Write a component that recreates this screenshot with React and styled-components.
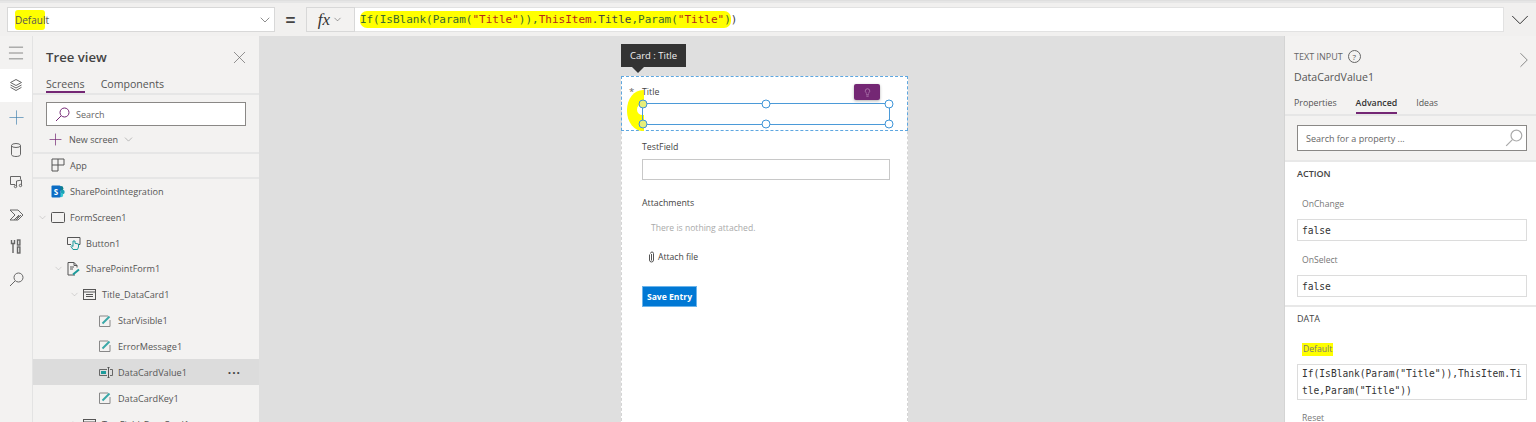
import React from "react";
import styled, { createGlobalStyle } from "styled-components";
import { ChevronDown, ChevronRight, X, Plus, Menu, Lightbulb } from "lucide-react";

const Global = createGlobalStyle`
  html, body { margin: 0; padding: 0; background: #fff; }
  body { font-family: "Open Sans", "Noto Sans", sans-serif; color: #444; }
  * { box-sizing: border-box; }
`;

const Page = styled.div`
  width: 1536px; height: 422px; overflow: hidden; display: flex; flex-direction: column; background: #dfdfdf;
`;
const TopBar = styled.div`
  height: 35px; flex: none; display: flex; align-items: center; padding: 0 0 0 7px;
  background: #f1f0ef; border-top: 2px solid #e6e6e6; margin-top: 1px;
`;
const PropSelect = styled.div`
  width: 269px; height: 25px; background: #fff; border: 1px solid #d8d8d8; display: flex; align-items: center;
  justify-content: space-between; padding: 0 1px 0 7px; font-size: 10px; color: #555;
`;
const Hl = styled.mark`
  background: #ffff00; color: inherit; border-radius: ${p => p.$r || 0}px; padding: ${p => p.$pad || "0"};
`;
const Equals = styled.div`
  width: 31px; text-align: center; font: 700 17px "Liberation Sans", sans-serif; color: #444; padding-top: 2px;
`;
const FxBox = styled.div`
  width: 49px; height: 25px; border: 1px solid #d8d8d8; background: #f3f2f1; display: flex; align-items: center;
  justify-content: center; gap: 2px; font: italic 17px "Liberation Serif", serif; color: #333;
`;
const FormulaBox = styled.div`
  width: 1153px; height: 25px; background: #fff; border: 1px solid #e2e2e2; border-left: none;
  display: flex; align-items: center; padding-left: 5px;
  font: 11px/1 "DejaVu Sans Mono", monospace; color: #3c6a2e; white-space: pre;
`;
const FxRed = styled.span` color: #b32a1c; `;
const Dark = styled.span` color: #444; `;
const FormulaToggle = styled.div`
  width: 32px; display: flex; justify-content: center; color: #333;
`;

const Body = styled.div` flex: 1; display: flex; min-height: 0; `;
const Rail = styled.nav`
  width: 33px; flex: none; background: #f3f2f1; border-right: 1px solid #e3e3e3; padding-top: 1px; display: flex; flex-direction: column;
`;
const RailItem = styled.div`
  height: 32.3px; flex: none; display: flex; align-items: center; justify-content: center;
  background: ${p => (p.$active ? "#fff" : "transparent")}; color: #555;
`;

const TreePanel = styled.aside`
  width: 226px; flex: none; background: #f3f2f1; display: flex; flex-direction: column;
`;
const TreeHead = styled.div`
  height: 39px; flex: none; display: flex; align-items: center; justify-content: space-between;
  padding: 3px 9px 0 13px; font-size: 13.2px; font-weight: 600; color: #444;
`;
const Tabs = styled.div`
  display: flex; gap: ${p => p.$gap}px; padding-left: ${p => p.$left}px; height: ${p => p.$h}px;
  border-bottom: 2px solid #e6e6e6; flex: none; font-size: ${p => p.$size}px; color: #555;
`;
const Tab = styled.div`
  height: calc(100%); display: flex; align-items: center; padding-top: ${p => p.$pt || 1}px; white-space: nowrap;
  border-bottom: 2px solid ${p => (p.$active ? "#742774" : "transparent")};
  font-weight: ${p => (p.$bold ? 600 : 400)}; color: ${p => (p.$bold ? "#333" : "#555")};
`;
const TreeSearch = styled.div`
  flex: none; height: 24px; margin: 7px 13px 0; background: #fff; border: 1px solid #8a8886; display: flex; align-items: center;
  gap: 6px; padding-left: 8px; font-size: 9px; color: #666;
`;
const NewScreen = styled.div`
  flex: none; height: 28px; display: flex; align-items: center; gap: 4px; padding-left: 13px; font-size: 9px; color: #555;
  border-bottom: 2px solid #e6e6e6;
`;
const RowList = styled.div` display: flex; flex-direction: column; `;
const Row = styled.div`
  position: relative; height: ${p => (p.$divider ? "24.5px" : "25.85px")}; flex: none; display: flex; align-items: center; font-size: 9.15px; white-space: nowrap; color: #555;
  padding-left: ${p => 4 + p.$level * 16}px; background: ${p => (p.$selected ? "#dcdcdc" : "transparent")};
  border-bottom: ${p => (p.$divider ? "2px solid #e6e6e6" : "none")};
`;
const Caret = styled.span` width: 14px; flex: none; display: flex; color: #aaa; `;
const RowIcon = styled.span` width: 19px; flex: none; display: flex; `;
const More = styled.span`
  position: absolute; right: 18px; top: 2px; font-size: 12px; letter-spacing: 1px; font-weight: 700; color: #444;
`;

const Canvas = styled.main`
  flex: 1; display: flex; justify-content: flex-start; padding-left: 362px; padding-top: 40px; background: #dfdfdf; min-width: 0; position: relative;
`;
const Tooltip = styled.div`
  position: absolute; left: 362px; top: 8px; width: 65px; height: 23px; background: #333; color: #f0f0f0; font-size: 9.5px;
  display: flex; align-items: center; justify-content: center;
  &::after { content: ""; position: absolute; left: 11px; top: 23px; border: 6px solid transparent; border-top-color: #333; border-bottom: none; }
`;
const Card = styled.div`
  width: 287px; height: 350px; background: #fff; border-left: 1px dashed #d4d4d4; border-right: 1px dashed #d4d4d4; display: flex; flex-direction: column;
`;
const SelectedCard = styled.div`
  position: relative; height: 55px; flex: none; margin: 0 -1px; border: 1px dashed #5ea7e0;
`;
const Field = styled.div` font-size: 8.8px; color: #444; `;
const TitleLabel = styled(Field)` position: absolute; left: 20px; top: 9px; `;
const Star = styled.span` position: absolute; left: 7px; top: 8px; font-size: 9.5px; color: #666; `;
const YellowBlob = styled.div`
  position: absolute; left: 5px; top: 13px; width: 17px; height: 41px; background: #ffff00;
  border-radius: 16px 0 0 16px / 20px 0 0 20px;
  &::after { content: ""; position: absolute; right: -1px; top: 14px; width: 8px; height: 11px; background: #fff; border-radius: 8px 0 0 8px; }
`;
const SelectBox = styled.div`
  position: absolute; left: 20px; top: 26px; width: 248px; height: 22px; border: 1px solid #4b9ad8; border-width: 1.5px 1px;
`;
const Handle = styled.span`
  position: absolute; width: 9px; height: 9px; border-radius: 50%; background: ${p => (p.$tinted ? "#e6ef7a" : "#fff")}; border: 1px solid #3f95d8;
  left: ${p => p.$x}; top: ${p => p.$y}; transform: translate(-50%, -50%);
`;
const IdeaBtn = styled.div`
  position: absolute; left: 232px; top: 7px; width: 26px; height: 16px; background: #742774; border-radius: 2px; color: #c9a2c9;
  display: flex; align-items: center; justify-content: center; box-shadow: 0 1px 3px rgba(0,0,0,.3);
`;
const CardBody = styled.div` padding: 10px 17px 0 20px; display: flex; flex-direction: column; `;
const TextBox = styled.div` height: 21px; margin-top: 6px; border: 1px solid #c8c8c8; background: #fff; `;
const AttachLabel = styled(Field)` margin-top: 17px; `;
const Nothing = styled.div` margin: 13px 0 0 9px; font-size: 8.6px; color: #aaa; `;
const AttachRow = styled.div` display: flex; align-items: center; gap: 3px; margin: 17px 0 0 6px; font-size: 8.6px; color: #444; `;
const SaveBtn = styled.div`
  width: 55px; height: 21px; margin-top: 23px; background: #0078d4; border: 1px solid #6cb4ea; color: #fff; font: 700 8.6px "Open Sans", sans-serif;
  display: flex; align-items: center; justify-content: center;
`;

const Inspector = styled.aside`
  width: 252px; flex: none; background: #fff; display: flex; flex-direction: column; border-left: 1px solid #d4d4d4;
`;
const InspectorHead = styled.div` background: #f3f2f1; flex: none; `;
const TypeRow = styled.div`
  height: 32px; padding: 8px 0 0 9px; display: flex; align-items: center; gap: 5px; font-size: 9px; color: #666; position: relative;
`;
const Help = styled.span`
  width: 13px; height: 13px; border-radius: 50%; border: 1px solid #666; font-size: 8px; display: flex; align-items: center; justify-content: center; color: #555;
`;
const Collapse = styled.span` position: absolute; right: -1px; top: 11px; color: #777; display: flex; `;
const CtlName = styled.div` padding-left: 9px; height: 14px; margin-top: 2px; font-size: 10.6px; line-height: 14px; color: #555; `;
const PropSearchWrap = styled.div` background: #f3f2f1; height: 46px; flex: none; padding: 9px 9px 0 12px; border-bottom: 2px solid #e8e8e8; `;
const PropSearch = styled.div`
  height: 26px; background: #fff; border: 1px solid #8a8886; display: flex; align-items: center; justify-content: space-between;
  padding: 0 3px 0 8px; font-size: 9px; color: #666;
`;
const SectionTitle = styled.div`
  height: ${p => p.$h}px; flex: none; padding: ${p => p.$top}px 0 0 12px; font-size: 9px; font-weight: ${p => p.$w || 400}; color: #444;
`;
const PropLabel = styled.div`
  height: ${p => p.$h}px; padding: ${p => p.$pt || 0}px 0 0 17px; display: flex; align-items: center; font-size: 8.6px; line-height: 1; color: #777; flex: none;
`;
const PropValue = styled.div`
  flex: none; margin: 0 9px 0 12px; min-height: 22px; border: 1px solid #dcdcdc; padding: 0 4px; display: flex; align-items: center;
  font: 9.6px/17px "DejaVu Sans Mono", monospace; color: #333; white-space: pre-wrap; word-break: break-all;
`;
const Divider = styled.div` height: 2px; background: #e8e8e8; flex: none; margin-top: ${p => p.$top}px; `;

const S = { fill: "none", stroke: "currentColor", strokeWidth: 1 };
const LayersIcon = () => (
  <svg width="14" height="14" viewBox="0 0 14 14" {...S} stroke="#666">
    <path d="M7 1.5 12.5 4.5 7 7.5 1.5 4.5Z" /><path d="M1.5 7 7 10 12.5 7" /><path d="M1.5 9.3 7 12.5 12.5 9.3" />
  </svg>
);
const CylinderIcon = () => (
  <svg width="14" height="16" viewBox="0 0 14 16" {...S} stroke="#666">
    <ellipse cx="7" cy="3.5" rx="4.5" ry="2" /><path d="M2.5 3.5v9c0 1.2 2 2 4.5 2s4.5-.8 4.5-2v-9" />
  </svg>
);
const MediaIcon = () => (
  <svg width="15" height="14" viewBox="0 0 15 14" {...S} stroke="#666">
    <path d="M6 9.5H1.5v-8h10v3" /><path d="M7.5 11.5V6l5-1v5.5" />
    <circle cx="6.5" cy="11.5" r="1.2" /><circle cx="11.5" cy="10.5" r="1.2" />
  </svg>
);
const FlowIcon = () => (
  <svg width="15" height="12" viewBox="0 0 15 12" {...S} stroke="#666">
    <path d="M1 1h8l5 5-5 5H1l5-5Z" /><path d="M5 11l5-5-2 4M7 11l5-5" />
  </svg>
);
const ToolsIcon = () => (
  <svg width="12" height="15" viewBox="0 0 12 15" fill="none" stroke="#666" strokeWidth="1.4">
    <path d="M1.5 1v3.5h3V1M3 5v9" /><rect x="7.5" y="1" width="2.4" height="5" /><rect x="7.5" y="8" width="2.4" height="6" />
  </svg>
);
const GridIcon = () => (
  <svg width="14" height="14" viewBox="0 0 14 14" {...S} stroke="#555"><path d="M1 1h12v6H7v6H1ZM1 7h6M7 1v6" /></svg>
);
const SpIcon = () => (
  <svg width="14" height="13" viewBox="0 0 14 13">
    <circle cx="10" cy="3.5" r="2.4" fill="#0f7f8f" />
    <circle cx="11.5" cy="7" r="2.2" fill="#1ba1b5" />
    <circle cx="10" cy="10" r="2.2" fill="#37c6d0" />
    <rect x="0.5" y="0.5" width="9" height="12" rx="1" fill="#0b6cc4" />
    <text x="5" y="9.5" fontSize="8" fontWeight="700" fill="#fff" textAnchor="middle" fontFamily="Open Sans">S</text>
  </svg>
);
const ScreenIcon = () => (
  <svg width="14" height="11" viewBox="0 0 14 11" {...S} stroke="#555"><rect x="0.5" y="0.5" width="13" height="10" rx="1" /></svg>
);
const ButtonIcon = () => (
  <svg width="14" height="14" viewBox="0 0 14 14" fill="none">
    <path d="M4 8.5H.5v-7h12.5v7H11" stroke="#555" />
    <path d="M6 5v5.5L4.8 9.5 4 10.5 6 13.5h4.5l1-2.5V8L8 7.3V5Z" stroke="#1c9a9a" />
  </svg>
);
const FormIcon = () => (
  <svg width="13" height="14" viewBox="0 0 13 14" fill="none">
    <path d="M7 .5H1v12.5h7M7 .5 10 3.5v2M7 .5v3h3" stroke="#555" /><path d="M3 5h4M3 7h3" stroke="#555" />
    <path d="M6 12.5l6-5" stroke="#1c9a9a" strokeWidth="2" />
  </svg>
);
const CardIcon = () => (
  <svg width="13" height="11" viewBox="0 0 13 11" {...S} stroke="#555"><rect x="0.5" y="0.5" width="12" height="10" /><path d="M0.5 3h12M3 5.5h7M3 7.5h7" /></svg>
);
const EditIcon = () => (
  <svg width="12" height="12" viewBox="0 0 12 12" fill="none">
    <path d="M9 1H.5v10.5H11V5" stroke="#888" /><path d="M3.5 8.5l7-7" stroke="#3aa8a8" strokeWidth="2" />
  </svg>
);
const InputIcon = () => (
  <svg width="14" height="11" viewBox="0 0 14 11" fill="none">
    <path d="M8 2.5H.5v6H8M11 2.5h2.5v6H11" stroke="#666" /><rect x="2" y="4" width="5" height="3" fill="#1c9a9a" />
    <path d="M8.5.5h2M9.5.5v10M8.5 10.5h2" stroke="#555" />
  </svg>
);
const Magnifier = ({ color = "#742774", size = 15 }) => (
  <svg width={size} height={size} viewBox="0 0 15 15" {...S} stroke={color}><circle cx="9.5" cy="5.5" r="4.5" /><path d="M6 9 1 14" /></svg>
);
const ClipIcon = () => (
  <svg width="7" height="12" viewBox="0 0 7 12" fill="none" stroke="#555" strokeWidth="1">
    <path d="M3.5 3v6.5" /><path d="M1.5 3.5v5.5a2 2 0 0 0 4 0V2.5a1.5 1.5 0 0 0-3 0" />
  </svg>
);

const rows = [
  { level: 0, icon: <SpIcon />, label: "SharePointIntegration" },
  { level: 0, caret: true, icon: <ScreenIcon />, label: "FormScreen1" },
  { level: 1, icon: <ButtonIcon />, label: "Button1" },
  { level: 1, caret: true, icon: <FormIcon />, label: "SharePointForm1" },
  { level: 2, caret: true, icon: <CardIcon />, label: "Title_DataCard1" },
  { level: 3, icon: <EditIcon />, label: "StarVisible1" },
  { level: 3, icon: <EditIcon />, label: "ErrorMessage1" },
  { level: 3, icon: <InputIcon />, label: "DataCardValue1", selected: true },
  { level: 3, icon: <EditIcon />, label: "DataCardKey1" },
  { level: 2, caret: "right", icon: <CardIcon />, label: "TestField_DataCard1" },
];

export default function App() {
  return (
    <Page>
      <Global />
      <TopBar>
        <PropSelect>
          <span><Hl $r={3} $pad="3px 0">Defaul</Hl>t</span>
          <ChevronDown size={16} strokeWidth={1} />
        </PropSelect>
        <Equals>=</Equals>
        <FxBox>fx<ChevronDown size={11} strokeWidth={1} /></FxBox>
        <FormulaBox>
          <Hl $r={7} $pad="3px 0">If(IsBlank(Param(<FxRed>"Title"</FxRed>)),<FxRed>ThisItem</FxRed><Dark>.Title</Dark>,Param(<FxRed>"Title"</FxRed>)</Hl><Dark>)</Dark>
        </FormulaBox>
        <FormulaToggle><ChevronDown size={30} strokeWidth={0.8} /></FormulaToggle>
      </TopBar>
      <Body>
        <Rail>
          <RailItem><Menu size={20} strokeWidth={0.8} /></RailItem>
          <RailItem $active><LayersIcon /></RailItem>
          <RailItem><Plus size={23} strokeWidth={0.7} color="#3f7fae" /></RailItem>
          <RailItem><CylinderIcon /></RailItem>
          <RailItem><MediaIcon /></RailItem>
          <RailItem><FlowIcon /></RailItem>
          <RailItem><ToolsIcon /></RailItem>
          <RailItem><Magnifier color="#666" /></RailItem>
        </Rail>
        <TreePanel>
          <TreeHead>Tree view<X size={21} strokeWidth={0.8} color="#666" /></TreeHead>
          <Tabs $gap={16} $left={13} $h={20} $size={10.6}>
            <Tab $active>Screens</Tab>
            <Tab>Components</Tab>
          </Tabs>
          <TreeSearch><Magnifier />Search</TreeSearch>
          <NewScreen><Plus size={19} strokeWidth={0.9} color="#742774" />New screen<ChevronDown size={13} strokeWidth={1} color="#888" /></NewScreen>
          <RowList>
            <Row $level={0} $divider><Caret /><RowIcon><GridIcon /></RowIcon>App</Row>
            {rows.map(r => (
              <Row key={r.label} $level={r.level} $selected={r.selected}>
                <Caret>
                  {r.caret === true && <ChevronDown size={11} strokeWidth={1} />}
                  {r.caret === "right" && <ChevronRight size={11} strokeWidth={1} />}
                </Caret>
                <RowIcon>{r.icon}</RowIcon>
                {r.label}
                {r.selected && <More>...</More>}
              </Row>
            ))}
          </RowList>
        </TreePanel>
        <Canvas>
          <Tooltip>Card : Title</Tooltip>
          <Card>
            <SelectedCard>
              <YellowBlob />
              <Star>*</Star>
              <TitleLabel>Title</TitleLabel>
              <SelectBox>
                <Handle $x="0" $y="0" $tinted /><Handle $x="50%" $y="0" /><Handle $x="100%" $y="0" />
                <Handle $x="0" $y="100%" $tinted /><Handle $x="50%" $y="100%" /><Handle $x="100%" $y="100%" />
              </SelectBox>
              <IdeaBtn><Lightbulb size={9} strokeWidth={1.5} /></IdeaBtn>
            </SelectedCard>
            <CardBody>
              <Field>TestField</Field>
              <TextBox />
              <AttachLabel>Attachments</AttachLabel>
              <Nothing>There is nothing attached.</Nothing>
              <AttachRow><ClipIcon />Attach file</AttachRow>
              <SaveBtn>Save Entry</SaveBtn>
            </CardBody>
          </Card>
        </Canvas>
        <Inspector>
          <InspectorHead>
            <TypeRow>TEXT INPUT<Help>?</Help><Collapse><ChevronRight size={26} strokeWidth={0.8} /></Collapse></TypeRow>
            <CtlName>DataCardValue1</CtlName>
            <Tabs $gap={19} $left={9} $h={32} $size={8.8}>
              <Tab $pt={10}>Properties</Tab>
              <Tab $pt={10} $active $bold>Advanced</Tab>
              <Tab $pt={10}>Ideas</Tab>
            </Tabs>
          </InspectorHead>
          <PropSearchWrap>
            <PropSearch>Search for a property ...<Magnifier color="#aaa" size={18} /></PropSearch>
          </PropSearchWrap>
          <SectionTitle $h={27} $top={5} $w={600}>ACTION</SectionTitle>
          <PropLabel $h={30} $pt={1}>OnChange</PropLabel>
          <PropValue>false</PropValue>
          <PropLabel $h={34} $pt={4}>OnSelect</PropLabel>
          <PropValue>false</PropValue>
          <Divider $top={8} />
          <SectionTitle $h={28} $top={5}>DATA</SectionTitle>
          <PropLabel $h={29}><Hl $pad="2px 1px">Default</Hl></PropLabel>
          <PropValue>If(IsBlank(Param("Title")),ThisItem.Title,Param("Title"))</PropValue>
          <PropLabel $h={23} $pt={13}>Reset</PropLabel>
        </Inspector>
      </Body>
    </Page>
  );
}
